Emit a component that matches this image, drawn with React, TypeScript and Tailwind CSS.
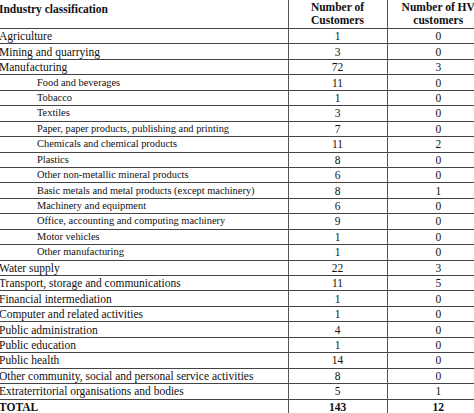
import React from 'react';

type Row = { name: string; customers: number; hv: number; sub?: boolean };

const rows: Row[] = [
  { name: 'Agriculture', customers: 1, hv: 0 },
  { name: 'Mining and quarrying', customers: 3, hv: 0 },
  { name: 'Manufacturing', customers: 72, hv: 3 },
  { name: 'Food and beverages', customers: 11, hv: 0, sub: true },
  { name: 'Tobacco', customers: 1, hv: 0, sub: true },
  { name: 'Textiles', customers: 3, hv: 0, sub: true },
  { name: 'Paper, paper products, publishing and printing', customers: 7, hv: 0, sub: true },
  { name: 'Chemicals and chemical products', customers: 11, hv: 2, sub: true },
  { name: 'Plastics', customers: 8, hv: 0, sub: true },
  { name: 'Other non-metallic mineral products', customers: 6, hv: 0, sub: true },
  { name: 'Basic metals and metal products (except machinery)', customers: 8, hv: 1, sub: true },
  { name: 'Machinery and equipment', customers: 6, hv: 0, sub: true },
  { name: 'Office, accounting and computing machinery', customers: 9, hv: 0, sub: true },
  { name: 'Motor vehicles', customers: 1, hv: 0, sub: true },
  { name: 'Other manufacturing', customers: 1, hv: 0, sub: true },
  { name: 'Water supply', customers: 22, hv: 3 },
  { name: 'Transport, storage and communications', customers: 11, hv: 5 },
  { name: 'Financial intermediation', customers: 1, hv: 0 },
  { name: 'Computer and related activities', customers: 1, hv: 0 },
  { name: 'Public administration', customers: 4, hv: 0 },
  { name: 'Public education', customers: 1, hv: 0 },
  { name: 'Public health', customers: 14, hv: 0 },
  { name: 'Other community, social and personal service activities', customers: 8, hv: 0 },
  { name: 'Extraterritorial organisations and bodies', customers: 5, hv: 1 },
];

export default function App() {
  return (
    <div
      className="w-[474px] h-[413px] overflow-hidden bg-white text-[#111]"
      style={{ fontFamily: '"Liberation Serif", "Times New Roman", serif' }}
    >
      <table className="table-fixed border-collapse w-[490px] -ml-[1px]">
        <colgroup>
          <col className="w-[289px]" />
          <col className="w-[99px]" />
          <col className="w-[102px]" />
        </colgroup>
        <thead>
          <tr className="h-[28.5px] border-b border-[#444] font-bold text-[11.5px] leading-[13px]">
            <th className="text-left align-top pt-[3px] font-bold border-r border-[#555]">Industry classification</th>
            <th className="text-center align-middle font-bold border-r border-[#555]">
              Number of
              <br />
              Customers
            </th>
            <th className="text-center align-middle font-bold">
              Number of HV
              <br />
              customers
            </th>
          </tr>
        </thead>
        <tbody>
          {rows.map((r) => (
            <tr key={r.name} className="h-[15.45px] border-b border-[#444] leading-[14px]">
              <td
                className={
                  r.sub
                    ? 'pl-[38px] text-[10.4px] whitespace-nowrap overflow-hidden border-r border-[#555]'
                    : 'text-[11.5px] whitespace-nowrap overflow-hidden border-r border-[#555]'
                }
              >
                {r.name}
              </td>
              <td className="text-center text-[11.5px] border-r border-[#555]">{r.customers}</td>
              <td className="text-center text-[11.5px]">{r.hv}</td>
            </tr>
          ))}
          <tr className="h-[15.45px] font-bold leading-[14px]">
            <td className="text-[11.5px] border-r border-[#555]">TOTAL</td>
            <td className="text-center text-[11.5px] border-r border-[#555]">143</td>
            <td className="text-center text-[11.5px]">12</td>
          </tr>
        </tbody>
      </table>
    </div>
  );
}
